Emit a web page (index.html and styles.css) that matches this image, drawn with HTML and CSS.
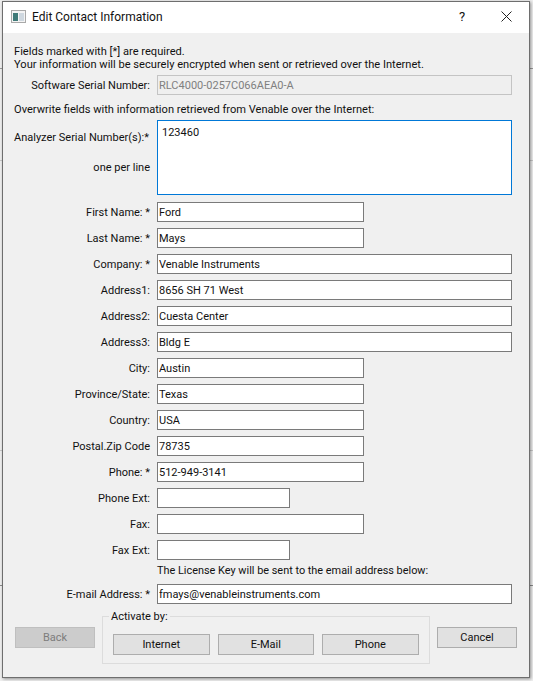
FILE: index.html
```html
<!DOCTYPE html>
<html lang="en">
<head>
<meta charset="utf-8">
<title>Edit Contact Information</title>
<link rel="stylesheet" href="styles.css">
</head>
<body>
<div class="window">
  <header class="titlebar">
    <svg class="app-icon" width="15" height="13" viewBox="0 0 15 13"><rect x="0.5" y="0.5" width="14" height="12" fill="#f4f4f4" stroke="#a9a9a9"/><rect x="2" y="3" width="5" height="8" fill="#3f7a78"/><rect x="8" y="3" width="5" height="8" fill="#cfd8e0"/></svg>
    <span class="title">Edit Contact Information</span>
    <span class="help">?</span>
    <svg class="close" width="11" height="11" viewBox="0 0 11 11"><path d="M0.5 0.5L10.5 10.5M10.5 0.5L0.5 10.5" stroke="#222" stroke-width="1" fill="none"/></svg>
  </header>
  <main class="body">
    <p class="note">Fields marked with [*] are required.<br>Your information will be securely encrypted when sent or retrieved over the Internet.</p>
    <div class="row serial">
      <label class="lbl">Software Serial Number:</label>
      <input class="field full disabled" value="RLC4000-0257C066AEA0-A" disabled>
    </div>
    <p class="note overwrite">Overwrite fields with information retrieved from Venable over the Internet:</p>
    <div class="analyzer">
      <div class="analyzer-labels">
        <span class="left">Analyzer Serial Number(s):*</span>
        <span class="per">one per line</span>
      </div>
      <div class="area">123460</div>
    </div>
    <div class="rows">
      <div class="row"><label class="lbl">First Name: *</label><input class="field mid" value="Ford"></div>
      <div class="row"><label class="lbl">Last Name: *</label><input class="field mid" value="Mays"></div>
      <div class="row"><label class="lbl">Company: *</label><input class="field full" value="Venable Instruments"></div>
      <div class="row"><label class="lbl">Address1:</label><input class="field full" value="8656 SH 71 West"></div>
      <div class="row"><label class="lbl">Address2:</label><input class="field full" value="Cuesta Center"></div>
      <div class="row"><label class="lbl">Address3:</label><input class="field full" value="Bldg E"></div>
      <div class="row"><label class="lbl">City:</label><input class="field mid" value="Austin"></div>
      <div class="row"><label class="lbl">Province/State:</label><input class="field mid" value="Texas"></div>
      <div class="row"><label class="lbl">Country:</label><input class="field mid" value="USA"></div>
      <div class="row"><label class="lbl">Postal.Zip Code</label><input class="field mid" value="78735"></div>
      <div class="row"><label class="lbl">Phone: *</label><input class="field mid" value="512-949-3141"></div>
      <div class="row"><label class="lbl">Phone Ext:</label><input class="field short" value=""></div>
      <div class="row"><label class="lbl">Fax:</label><input class="field mid" value=""></div>
      <div class="row"><label class="lbl">Fax Ext:</label><input class="field short" value=""></div>
    </div>
    <p class="license">The License Key will be sent to the email address below:</p>
    <div class="row"><label class="lbl">E-mail Address: *</label><input class="field full" value="fmays@venableinstruments.com"></div>
    <div class="actions">
      <button class="btn back" disabled>Back</button>
      <fieldset class="group">
        <legend>Activate by:</legend>
        <button class="btn act">Internet</button>
        <button class="btn act">E-Mail</button>
        <button class="btn act">Phone</button>
      </fieldset>
      <button class="btn cancel">Cancel</button>
    </div>
  </main>
</div>
</body>
</html>
```
FILE: styles.css
```css
* { box-sizing: border-box; }
html, body { margin: 0; padding: 0; }
body {
  width: 533px;
  height: 681px;
  overflow: hidden;
  background:
    linear-gradient(#9a9a9a, #9a9a9a) 0 68px / 100% 1px no-repeat,
    linear-gradient(#c8c8c8, #c8c8c8) 0 160px / 100% 1px no-repeat,
    linear-gradient(#c8c8c8, #c8c8c8) 0 450px / 100% 1px no-repeat,
    linear-gradient(#8a8a8a, #8a8a8a) 0 585px / 100% 1px no-repeat,
    #efefef;
  padding: 1px 0 0 2px;
  font-family: Roboto, "Noto Sans", sans-serif;
  font-size: 11px;
  color: #111;
}
.window {
  width: 528px;
  height: 677px;
  background: #f0f0f0;
  border: 1px solid #6e6e6e;
  box-shadow: 1px 1px 3px rgba(0,0,0,.4);
  display: flex;
  flex-direction: column;
}
.titlebar {
  height: 31px;
  background: #fff;
  display: flex;
  align-items: center;
  padding: 0 0 2px 8px;
  flex: none;
}
.app-icon { flex: none; }
.title { margin-left: 6px; font-size: 12px; flex: 1; }
.help { font-size: 13px; width: 14px; margin-right: 32px; text-align: center; }
.close { margin-right: 17px; }
.body { padding: 12px 16px 0 10px; flex: 1; }
p { margin: 0; }
.note { line-height: 13px; white-space: nowrap; font-size: 11.1px; padding-left: 1px; }
.row { display: flex; align-items: center; height: 20px; margin-bottom: 6px; }
.lbl { width: 144px; flex: none; text-align: right; padding-right: 7px; white-space: nowrap; }
.serial { margin-top: 4px; margin-bottom: 0; }
.overwrite { margin-top: 8px; }
.field {
  height: 20px;
  border: 1px solid #7a7a7a;
  background: #fff;
  font: inherit;
  color: #111;
  padding: 0 1px;
  outline: none;
}
.full { width: 355px; }
.mid { width: 207px; }
.short { width: 133px; }
.disabled { background: #efefef; border-color: #c4c4c4; color: #808080; }
.analyzer { display: flex; margin-top: 4px; margin-bottom: 7px; }
.analyzer-labels { width: 144px; flex: none; display: flex; flex-direction: column; line-height: 14px; }
.left { margin-top: 11px; padding-left: 1px; white-space: nowrap; }
.per { text-align: right; padding-right: 7px; margin-top: 16px; }
.area {
  width: 355px;
  height: 75px;
  background: #fff;
  border: 1px solid #0078d7;
  padding: 5px 4px;
}
.license { padding-left: 144px; margin-top: -3px; line-height: 15px; margin-bottom: 6px; white-space: nowrap; font-size: 10.9px; }
.actions { display: flex; align-items: flex-start; }
.btn {
  font: inherit;
  color: #111;
  background: #e1e1e1;
  border: 1px solid #adadad;
  padding: 0;
  height: 21px;
  flex: none;
}
.back { width: 80px; margin: 17px 0 0 2px; background: #cccccc; border-color: #bfbfbf; color: #7c7c7c; }
.cancel { width: 80px; margin: 17px 0 0 0; }
.group {
  width: 328px;
  height: 54px;
  margin: 0 7px;
  padding: 0 10px;
  border: 1px solid #dcdcdc;
  display: flex;
  gap: 8px;
  align-items: flex-start;
  flex: none;
}
.group legend { padding: 0 2px; margin-left: -4px; line-height: 13px; }
.act { width: 96.5px; margin-top: 11px; }
```
